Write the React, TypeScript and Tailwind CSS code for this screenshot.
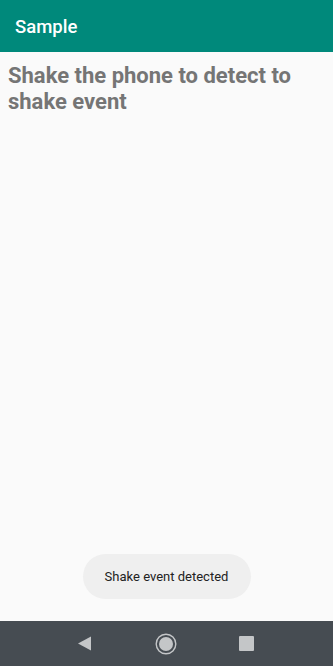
export default function App() {
  return (
    <div className="flex h-[666px] w-[333px] flex-col bg-[#fafafa] font-['Roboto',sans-serif]">
      <header className="flex h-[52px] shrink-0 items-center bg-[#00897b] px-[15px] pt-[3px]">
        <span className="text-[18.5px] font-medium text-white">Sample</span>
      </header>

      <main className="flex flex-1 flex-col px-[8px] pt-[11px]">
        <h1 className="text-[22px] font-bold leading-[26px] text-[#757575]">
          Shake the phone to detect to shake event
        </h1>
        <div className="mt-auto mb-[22px] flex justify-center">
          <div className="flex h-[45px] w-[168px] items-center justify-center rounded-full bg-[#efefef] text-[13px] text-[#222]">
            Shake event detected
          </div>
        </div>
      </main>

      <nav className="flex h-[45px] shrink-0 items-center bg-[#464c52]">
        <div className="flex w-full items-center">
          <svg width="15" height="15" viewBox="0 0 15 15" className="ml-[77px]">
            <path d="M14 0.5 L14 14.5 L1 7.5 Z" fill="#c4c6c8" />
          </svg>
          <svg width="22" height="22" viewBox="0 0 22 22" className="ml-[63px]">
            <circle cx="11" cy="11" r="9.8" fill="none" stroke="#c4c6c8" strokeWidth="1.4" />
            <circle cx="11" cy="11" r="7" fill="#c4c6c8" />
          </svg>
          <div className="ml-[62px] h-[15px] w-[15px] rounded-[1px] bg-[#c4c6c8]" />
        </div>
      </nav>
    </div>
  );
}
